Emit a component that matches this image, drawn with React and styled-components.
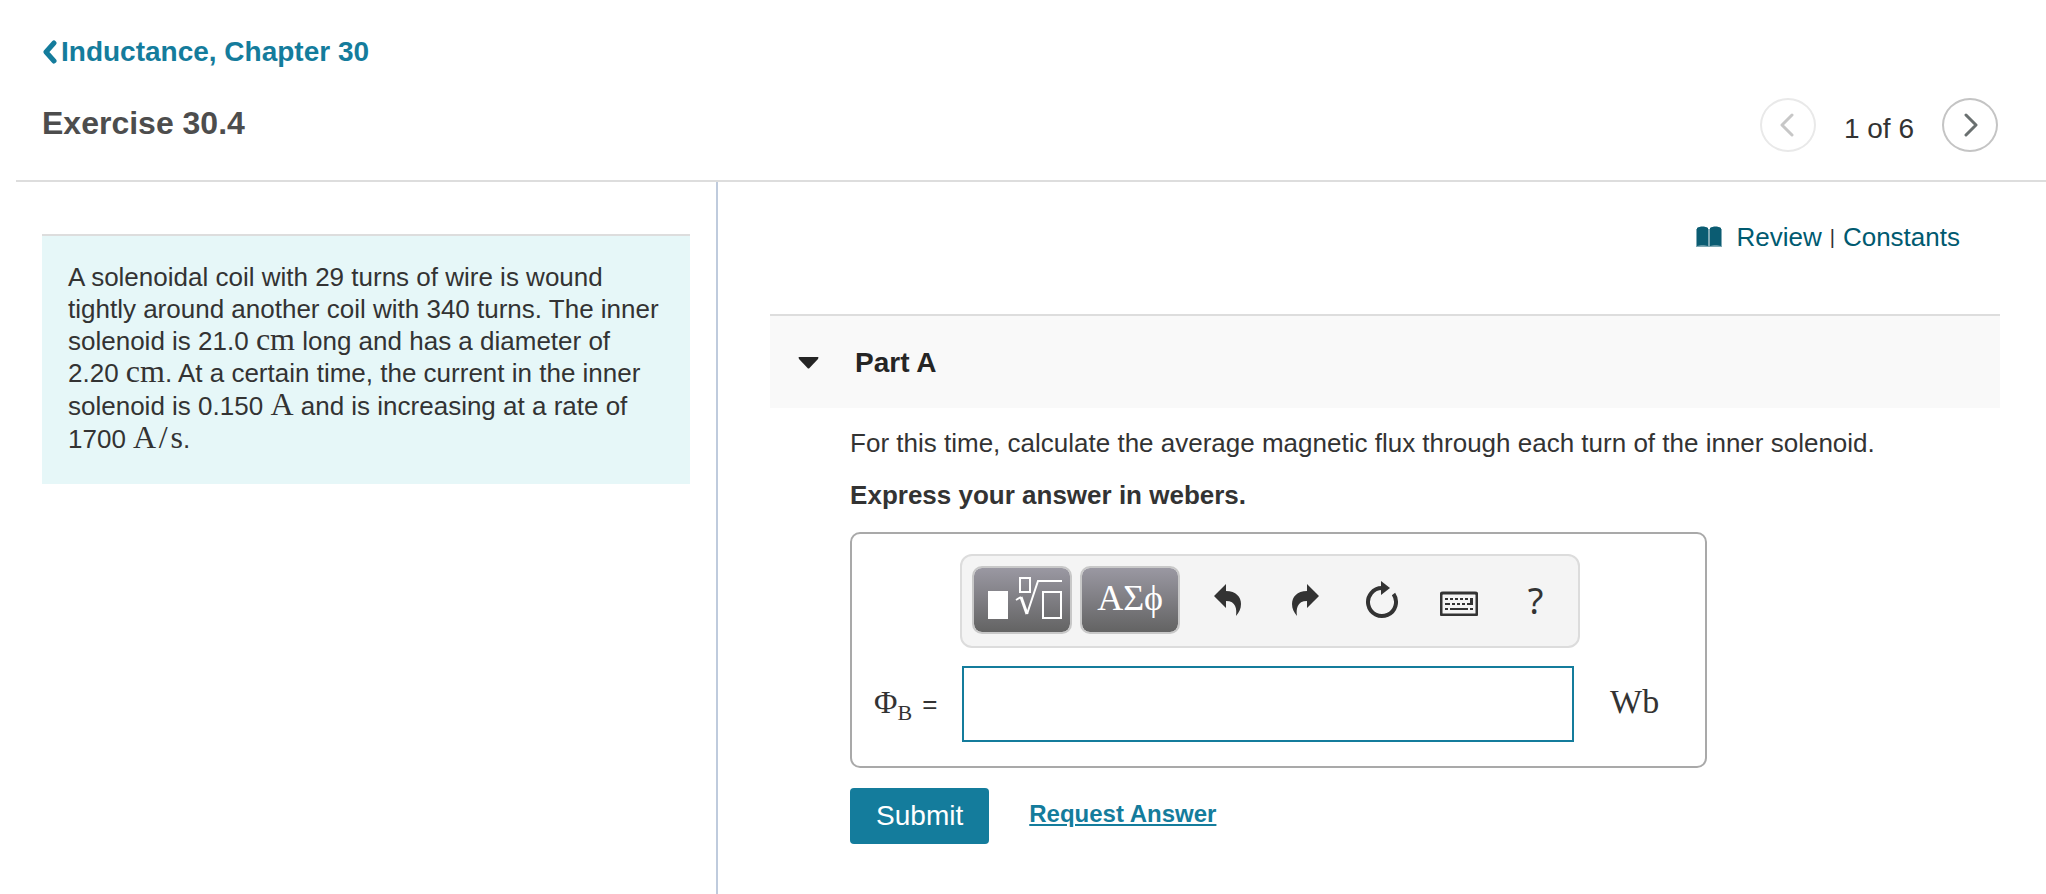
import React, {useState} from 'react';
import styled, {createGlobalStyle} from 'styled-components';

const GlobalStyle = createGlobalStyle`
  * {
    box-sizing: border-box;
  }

  body {
    margin: 0;
    background-color: #fff;
    color: #333;
    font-family: "Liberation Sans", Arial, sans-serif;
    font-size: 26px;
    line-height: 32px;
  }

  button, input {
    font-family: inherit;
  }
`;

const Page = styled.div`
  display: flex;
  flex-direction: column;
  min-height: 100vh;
`;

const Header = styled.header`
  display: flex;
  flex-direction: column;
  gap: 28px;
  margin-left: 16px;
  padding: 36px 48px 28px 26px;
  border-bottom: 2px solid #ddd;
`;

const BackLink = styled.a`
  display: flex;
  align-items: center;
  align-self: flex-start;
  gap: 4px;
  color: #147c9c;
  font-size: 28px;
  font-weight: 700;
  text-decoration: none;
`;

const TitleRow = styled.div`
  display: flex;
  align-items: flex-start;
  justify-content: space-between;
`;

const Title = styled.h1`
  margin: 0;
  color: #4d4d4d;
  font-size: 32px;
  font-weight: 700;
  line-height: 54px;
`;

const Pager = styled.nav`
  display: flex;
  align-items: center;
  gap: 28px;
  padding-top: 2px;
  font-size: 28px;
`;

const PagerCount = styled.span`
  padding-top: 8px;
`;

const PagerButton = styled.button`
  display: flex;
  align-items: center;
  justify-content: center;
  width: 56px;
  height: 54px;
  padding: 0;
  border: 2px solid #c4c4c4;
  border-radius: 50%;
  background-color: #fff;
  color: #6a7070;
  cursor: pointer;

  &:disabled {
    border-color: #e9e9e9;
    color: #c7c7c7;
    cursor: default;
  }
`;

const Columns = styled.div`
  display: flex;
  flex: 1;
`;

const ProblemPane = styled.aside`
  flex: 0 0 calc(35% + 2px);
  padding: 52px 26px 52px 42px;
  border-right: 2px solid #bfcbdd;
`;

const Problem = styled.div`
  padding: 25px 24px 29px 26px;
  border-top: 2px solid #ddd;
  background-color: #e6f7f8;
`;

const ProblemText = styled.p`
  margin: 0;
`;

const MathText = styled.span`
  font-family: "Liberation Serif", "Times New Roman", serif;
  font-size: 32px;
  line-height: ${({$tall}) => ($tall ? '30px' : '0')};
`;

const WorkPane = styled.main`
  flex: 1;
  min-width: 0;
  padding: 39px 46px 40px 52px;
`;

const Resources = styled.div`
  display: flex;
  align-items: center;
  justify-content: flex-end;
  gap: 8px;
  padding-right: 40px;
`;

const Divider = styled.span`
  font-size: 20px;
`;

const ResourceLink = styled.a`
  display: flex;
  align-items: center;
  gap: 14px;
  color: #005a70;
  text-decoration: none;
`;

const PartHeader = styled.h2`
  margin: 61px 0 0;
  border-top: 2px solid #ddd;
  background-color: #f9f9f9;
  line-height: 0;
`;

const PartToggle = styled.button`
  display: flex;
  align-items: center;
  gap: 36px;
  width: 100%;
  height: 92px;
  padding: 2px 28px 0;
  border: none;
  background: none;
  color: #252525;
  font-size: 28px;
  font-weight: 700;
  cursor: pointer;
`;

const PartBody = styled.div`
  padding: 19px 0 0 80px;
`;

const Question = styled.p`
  margin: 0 0 20px;
`;

const Instruction = styled.p`
  margin: 0 0 21px;
  font-weight: 700;
`;

const AnswerBox = styled.div`
  display: grid;
  grid-template-columns: 86px auto auto;
  align-items: center;
  row-gap: 18px;
  width: fit-content;
  padding: 20px 46px 24px 22px;
  border: 2px solid #a9a9a9;
  border-radius: 10px;
`;

const Toolbar = styled.div`
  display: flex;
  align-items: center;
  grid-column: 2 / 3;
  width: 620px;
  height: 94px;
  padding: 0 10px 2px;
  border: 2px solid #dcdcdc;
  border-radius: 12px;
  background-color: #f4f4f4;
`;

const PaletteButton = styled.button`
  display: flex;
  align-items: center;
  justify-content: center;
  flex-shrink: 0;
  width: 100px;
  height: 68px;
  margin-right: 8px;
  padding: 0 0 4px;
  border: 2px solid #c8c8c8;
  border-radius: 10px;
  background: linear-gradient(#9a98a2, #636363) padding-box;
  color: #fff;
  font-family: "Liberation Serif", "Times New Roman", serif;
  font-size: 36px;
  cursor: pointer;
`;

const IconButton = styled.button`
  display: flex;
  align-items: center;
  justify-content: center;
  flex-shrink: 0;
  width: 77px;
  height: 68px;
  padding: 0 0 0 2px;
  border: none;
  background: none;
  color: #333;
  font-family: "Noto Sans", sans-serif;
  font-size: 36px;
  cursor: pointer;
`;

const AnswerLabel = styled.label`
  display: flex;
  align-items: baseline;
  grid-column: 1 / 2;
  gap: 10px;
  padding-bottom: 2px;
`;

const Subscript = styled.sub`
  font-size: 22px;
  line-height: 0;
`;

const AnswerInput = styled.input`
  width: 612px;
  height: 76px;
  margin-left: 2px;
  padding: 0 12px;
  border: 2px solid #147c9c;
  border-radius: 0;
  outline: none;
  background-color: #fff;
  color: #333;
  font-size: 28px;
`;

const Unit = styled(MathText)`
  padding: 0 0 4px 30px;
  font-size: 34px;
`;

const Actions = styled.div`
  display: flex;
  align-items: center;
  gap: 40px;
  padding-top: 20px;
`;

const SubmitButton = styled.button`
  height: 56px;
  padding: 0 26px;
  border: none;
  border-radius: 4px;
  background-color: #147c9c;
  color: #fff;
  font-size: 28px;
  cursor: pointer;
`;

const RequestLink = styled.a`
  padding-bottom: 4px;
  color: #147c9c;
  font-size: 24px;
  font-weight: 700;
`;

const BackIcon = () => (
  <svg width="15" height="24" viewBox="0 0 15 24" fill="none" aria-hidden="true">
    <path d="M12 3 L4 12 L12 21" stroke="currentColor" strokeWidth="5" strokeLinecap="round" strokeLinejoin="round" />
  </svg>
);

const ChevronIcon = ({flipped}) => (
  <svg width="16" height="26" viewBox="0 0 16 26" fill="none" aria-hidden="true">
    <path
      d={flipped ? 'M12 3 L2 13 L12 23' : 'M4 3 L14 13 L4 23'}
      stroke="currentColor"
      strokeWidth="3"
      strokeLinecap="round"
      strokeLinejoin="round"
    />
  </svg>
);

const BookIcon = () => (
  <svg width="26" height="22" viewBox="0 0 26 22" aria-hidden="true">
    <path d="M0 3 H26 V21 H0 Z" fill="#7fa9b5" />
    <path d="M1 2 C4 0 9 0 12 2 V20 C9 19 4 19 1 20 Z" fill="#0b5c72" />
    <path d="M14 2 C17 0 22 0 25 2 V20 C22 19 17 19 14 20 Z" fill="#0b5c72" />
  </svg>
);

const CaretIcon = ({open}) => (
  <svg width="21" height="12" viewBox="0 0 21 12" fill="currentColor" aria-hidden="true">
    <path d={open ? 'M1 0 H20 Q21 0 20 2 L11.500 11 Q10.500 12 9.500 11 L1 2 Q0 0 1 0 Z' : 'M5 0 L16 6 L5 12 Z'} />
  </svg>
);

const TemplateIcon = () => (
  <svg width="82" height="44" viewBox="-6 0 82 44" fill="none" stroke="#fff" strokeWidth="2" aria-hidden="true">
    <rect x="1" y="15" width="20" height="28" fill="#fff" stroke="none" />
    <rect x="33" y="2" width="10" height="14" />
    <path d="M29 24 L34 21" />
    <path d="M34 21 L40 38" strokeWidth="3" />
    <path d="M40 38 L51 5 H75" />
    <rect x="56" y="16" width="18" height="26" />
  </svg>
);

const ArrowIcon = ({flipped}) => (
  <svg width="28" height="32" viewBox="0 0 28 32" fill="currentColor" aria-hidden="true">
    <path
      d="M0 12 L12 0 V7 C22 7 27 13 27 20 C27 25 25 28 22 32 C23 25 22 17 12 17 V24 Z"
      transform={flipped ? 'translate(28 0) scale(-1 1)' : undefined}
    />
  </svg>
);

const ResetIcon = () => (
  <svg width="34" height="38" viewBox="0 0 34 38" fill="none" aria-hidden="true">
    <path d="M17 7 A14 14 0 1 0 28.500 13" stroke="currentColor" strokeWidth="4" />
    <path d="M16 0 L25 7 L16 14 Z" fill="currentColor" />
  </svg>
);

const KeyboardIcon = () => (
  <svg width="38" height="32" viewBox="0 -8 38 32" fill="currentColor" aria-hidden="true">
    <rect x="1" y="1" width="36" height="22" rx="2" fill="none" stroke="currentColor" strokeWidth="3" />
    <path d="M5 6h3v2h-3z M10 6h3v2h-3z M15 6h3v2h-3z M20 6h3v2h-3z M25 6h3v2h-3z" />
    <path d="M5 11h5v2h-5z M12 11h3v2h-3z M17 11h3v2h-3z M22 11h3v2h-3z M30 6h3v7h-6v-2h3z" />
    <path d="M5 16h3v2h-3z M10 16h18v2h-18z M30 16h3v2h-3z" />
  </svg>
);

export default function App() {
  const [answer, setAnswer] = useState('');
  const [open, setOpen] = useState(true);

  return (
    <Page>
      <GlobalStyle />
      <Header>
        <BackLink href="#chapter">
          <BackIcon />
          Inductance, Chapter 30
        </BackLink>
        <TitleRow>
          <Title>Exercise 30.4</Title>
          <Pager>
            <PagerButton disabled aria-label="Previous item">
              <ChevronIcon flipped />
            </PagerButton>
            <PagerCount>1 of 6</PagerCount>
            <PagerButton aria-label="Next item">
              <ChevronIcon />
            </PagerButton>
          </Pager>
        </TitleRow>
      </Header>

      <Columns>
        <ProblemPane>
          <Problem>
            <ProblemText>
              A solenoidal coil with 29 turns of wire is wound tightly around another coil with 340
              turns. The inner solenoid is 21.0 <MathText>cm</MathText> long and has a diameter of
              2.20 <MathText>cm</MathText>. At a certain time, the current in the inner solenoid is
              0.150 <MathText $tall>A</MathText> and is increasing at a rate of
              1700 <MathText $tall>A&#8202;/&#8202;s</MathText>.
            </ProblemText>
          </Problem>
        </ProblemPane>

        <WorkPane>
          <Resources>
            <ResourceLink href="#review">
              <BookIcon />
              Review
            </ResourceLink>
            <Divider>|</Divider>
            <ResourceLink href="#constants">Constants</ResourceLink>
          </Resources>

          <PartHeader>
            <PartToggle aria-expanded={open} onClick={() => setOpen(!open)}>
              <CaretIcon open={open} />
              Part A
            </PartToggle>
          </PartHeader>

          {open && (
            <PartBody>
              <Question>
                For this time, calculate the average magnetic flux through each turn of the inner solenoid.
              </Question>
              <Instruction>Express your answer in webers.</Instruction>

              <AnswerBox>
                <Toolbar role="toolbar" aria-label="Math tools">
                  <PaletteButton aria-label="Templates">
                    <TemplateIcon />
                  </PaletteButton>
                  <PaletteButton aria-label="Symbols">ΑΣϕ</PaletteButton>
                  <IconButton aria-label="Undo">
                    <ArrowIcon />
                  </IconButton>
                  <IconButton aria-label="Redo">
                    <ArrowIcon flipped />
                  </IconButton>
                  <IconButton aria-label="Reset">
                    <ResetIcon />
                  </IconButton>
                  <IconButton aria-label="Keyboard shortcuts">
                    <KeyboardIcon />
                  </IconButton>
                  <IconButton aria-label="Help">?</IconButton>
                </Toolbar>
                <AnswerLabel htmlFor="answer">
                  <MathText $tall>Φ<Subscript>B</Subscript></MathText>
                  =
                </AnswerLabel>
                <AnswerInput
                  id="answer"
                  type="text"
                  autoComplete="off"
                  value={answer}
                  onChange={(e) => setAnswer(e.target.value)}
                />
                <Unit $tall>Wb</Unit>
              </AnswerBox>

              <Actions>
                <SubmitButton type="submit">Submit</SubmitButton>
                <RequestLink href="#request">Request Answer</RequestLink>
              </Actions>
            </PartBody>
          )}
        </WorkPane>
      </Columns>
    </Page>
  );
}
